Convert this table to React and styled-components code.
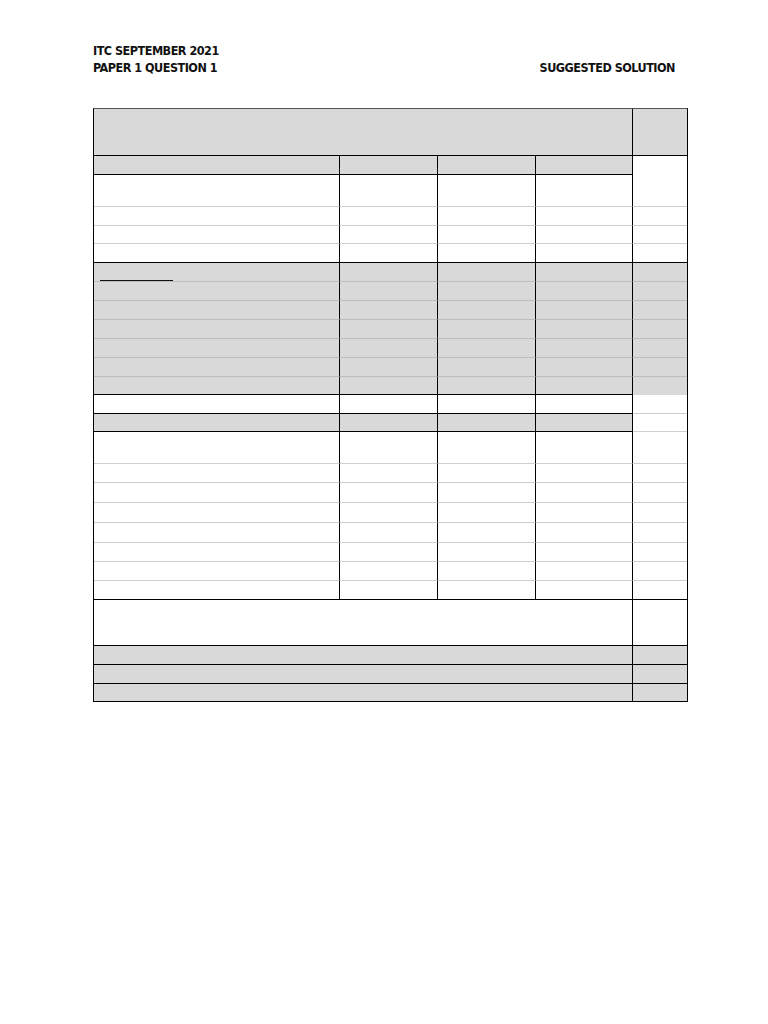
import React from "react";
import styled, { createGlobalStyle } from "styled-components";

const Global = createGlobalStyle`
  html, body { margin: 0; padding: 0; background: #ffffff; }
  body { font-family: "Liberation Sans Narrow", "DejaVu Sans Condensed", "Liberation Sans", sans-serif; }
`;

const Page = styled.div`
  width: 768px;
  height: 1024px;
  padding: 42px 0 0 93px;
  box-sizing: border-box;
`;

const Heading = styled.header`
  display: flex;
  justify-content: space-between;
  align-items: flex-end;
  width: 582px;
  font-weight: 700;
  font-size: 12.5px;
  letter-spacing: -0.5px;
  line-height: 17px;
  color: #111;
  margin-bottom: 32px;
`;

const HeadLines = styled.div`
  display: flex;
  flex-direction: column;
`;

const Sheet = styled.div`
  display: grid;
  width: 595px;
  box-sizing: border-box;
  grid-template-columns: 246px 98px 98px 97px 54px;
  grid-template-rows: 47px 19px 32px 19px 18px 19px 19px 19px 19px 19px 19px 19px 18px 19px 18px 32px 19px 20px 20px 20px 19px 19px 19px 46px 19px 19px 18px;
  border-left: 1px solid #000;
  border-right: 1px solid #000;
  border-top: 1px solid #555;
`;

const LINE = {
  black: "1px solid #000",
  light: "1px solid #cfcfcf",
  lightOnGray: "1px solid #bdbdbd",
  none: "0 none",
};

const Cell = styled.div`
  box-sizing: border-box;
  grid-column: ${(p) => p.$col} / span ${(p) => p.$span || 1};
  grid-row: ${(p) => p.$row} / span ${(p) => p.$rows || 1};
  background: ${(p) => (p.$gray ? "#d9d9d9" : "#ffffff")};
  border-bottom: ${(p) => LINE[p.$bottom || "none"]};
  border-right: ${(p) => (p.$sep ? "1px solid #000" : "0 none")};
`;

const Blank = styled.span`
  display: block;
  width: 73px;
  margin: 17px 0 0 6px;
  border-bottom: 1px solid #111;
`;

function buildCells() {
  const cells = [];
  const quad = (row, gray, bottom) => {
    for (let c = 1; c <= 4; c++) cells.push({ row, col: c, gray, bottom, sep: true });
  };
  cells.push({ row: 1, col: 1, span: 4, gray: true, bottom: "black", sep: true });
  cells.push({ row: 1, col: 5, gray: true, bottom: "black" });
  quad(2, true, "black");
  cells.push({ row: 2, col: 5, rows: 2, gray: false, bottom: "light" });
  quad(3, false, "light");
  quad(4, false, "light");
  cells.push({ row: 4, col: 5, bottom: "light" });
  quad(5, false, "light");
  cells.push({ row: 5, col: 5, bottom: "light" });
  quad(6, false, "black");
  cells.push({ row: 6, col: 5, bottom: "black" });
  for (let r = 7; r <= 13; r++) {
    const last = r === 13;
    quad(r, true, last ? "black" : "lightOnGray");
    cells.push({ row: r, col: 5, gray: true, bottom: last ? "none" : "lightOnGray" });
  }
  quad(14, false, "black");
  cells.push({ row: 14, col: 5, bottom: "light" });
  quad(15, true, "black");
  cells.push({ row: 15, col: 5, bottom: "light" });
  for (let r = 16; r <= 23; r++) {
    const last = r === 23;
    quad(r, false, last ? "black" : "light");
    cells.push({ row: r, col: 5, bottom: last ? "black" : "light" });
  }
  cells.push({ row: 24, col: 1, span: 4, bottom: "black", sep: true });
  cells.push({ row: 24, col: 5, bottom: "black" });
  for (let r = 25; r <= 27; r++) {
    cells.push({ row: r, col: 1, span: 4, gray: true, bottom: "black", sep: true });
    cells.push({ row: r, col: 5, gray: true, bottom: "black" });
  }
  return cells;
}

const cells = buildCells();

export default function App() {
  return (
    <>
      <Global />
      <Page>
        <Heading>
          <HeadLines>
            <span>ITC SEPTEMBER 2021</span>
            <span>PAPER 1 QUESTION 1</span>
          </HeadLines>
          <span>SUGGESTED SOLUTION</span>
        </Heading>
        <Sheet>
          {cells.map((c, i) => (
            <Cell
              key={i}
              $row={c.row}
              $col={c.col}
              $span={c.span}
              $rows={c.rows}
              $gray={c.gray}
              $bottom={c.bottom}
              $sep={c.sep}
            >
              {c.row === 7 && c.col === 1 ? <Blank /> : null}
            </Cell>
          ))}
        </Sheet>
      </Page>
    </>
  );
}
